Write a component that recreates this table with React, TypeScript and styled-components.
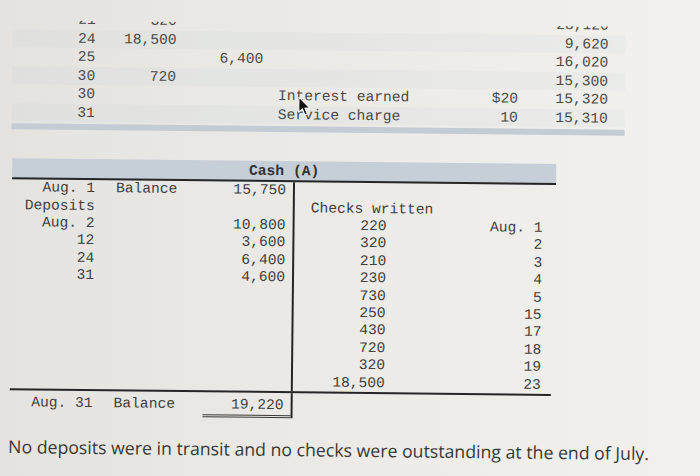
import React from 'react'
import styled, { createGlobalStyle } from 'styled-components'

const GlobalStyle = createGlobalStyle`
  html,
  body {
    margin: 0;
    padding: 0;
    width: 700px;
    height: 476px;
    overflow: hidden;
  }
  body {
    background: linear-gradient(90deg, #e4e3df 0%, #ebeae6 45%, #f2f1ee 100%);
  }
`

type TopRow = [string, string, string, string, string, string]

const bankRows: TopRow[] = [
  ['21', '320', '', '', '', '28,120'],
  ['24', '18,500', '', '', '', '9,620'],
  ['25', '', '6,400', '', '', '16,020'],
  ['30', '720', '', '', '', '15,300'],
  ['30', '', '', 'Interest earned', '$20', '15,320'],
  ['31', '', '', 'Service charge', '10', '15,310'],
]

const debits: [string, string, string][] = [
  ['Aug. 1', 'Balance', '15,750'],
  ['Deposits', '', ''],
  ['Aug. 2', '', '10,800'],
  ['12', '', '3,600'],
  ['24', '', '6,400'],
  ['31', '', '4,600'],
]

const credits: [string, string][] = [
  ['220', 'Aug. 1'],
  ['320', '2'],
  ['210', '3'],
  ['230', '4'],
  ['730', '5'],
  ['250', '15'],
  ['430', '17'],
  ['720', '18'],
  ['320', '19'],
  ['18,500', '23'],
]

const ROWS = 12

export default function App() {
  const leftRows = [...debits, ...Array(ROWS - debits.length).fill(['', '', ''])]

  return (
    <>
      <GlobalStyle />
      <Page>
        <TopClip>
          <TopTable>
            {bankRows.map((row, i) => (
              <BankRow key={i} $shaded={i % 2 === 1}>
                <Cell $align="right">{row[0]}</Cell>
                <Cell $align="right">{row[1]}</Cell>
                <Cell $align="right">{row[2]}</Cell>
                <Description>{row[3]}</Description>
                <Cell $align="right">{row[4]}</Cell>
                <Cell $align="right">{row[5]}</Cell>
              </BankRow>
            ))}
          </TopTable>
        </TopClip>
        <Bar />

        <TAccount>
          <AccountHeader>Cash (A)</AccountHeader>
          <AccountBody>
            <DebitSide>
              {leftRows.map((row, i) => (
                <DebitRow key={i}>
                  <Cell $align="right">{row[0]}</Cell>
                  <Label>{row[1]}</Label>
                  <Amount>{row[2]}</Amount>
                </DebitRow>
              ))}
            </DebitSide>
            <CreditSide>
              <CreditRow />
              <CreditRow>
                <Caption>Checks written</Caption>
              </CreditRow>
              {credits.map((row, i) => (
                <CreditRow key={i}>
                  <Cell $align="right">{row[0]}</Cell>
                  <CreditDate>{row[1]}</CreditDate>
                </CreditRow>
              ))}
            </CreditSide>
          </AccountBody>
          <AccountFooter>
            <BalanceRow>
              <Cell $align="right">Aug. 31</Cell>
              <Label>Balance</Label>
              <Total>19,220</Total>
            </BalanceRow>
          </AccountFooter>
        </TAccount>

        <Note>
          No deposits were in transit and no checks were outstanding at the end of July.
        </Note>

        <Pointer width="13" height="20" viewBox="0 0 13 20">
          <path
            d="M1 1 L1 16 L4.6 12.6 L7.2 18.6 L9.6 17.6 L7 11.8 L12 11.8 Z"
            fill="#111"
            stroke="#fff"
            strokeWidth="1"
            strokeLinejoin="round"
          />
        </Pointer>
      </Page>
    </>
  )
}

const Page = styled.div`
  position: relative;
  width: 700px;
  padding-top: 20px;
  transform: rotate(0.62deg);
  transform-origin: 0 0;
  font-family: 'Liberation Mono', 'DejaVu Sans Mono', monospace;
  font-size: 14.6px;
  color: #4a4a4a;
`

const TopClip = styled.div`
  overflow: hidden;
`

const TopTable = styled.div`
  margin: -9.75px 0 0 13px;
  width: 613px;
`

const BankRow = styled.div<{ $shaded?: boolean }>`
  display: grid;
  grid-template-columns: 83px 81px 87px 177px 78px 90px;
  height: 18.5px;
  line-height: 18.5px;
  padding-right: 17px;
  background: ${({ $shaded }) => ($shaded ? 'rgba(196, 208, 220, 0.13)' : 'transparent')};
`

const Cell = styled.div<{ $align?: 'left' | 'right' }>`
  text-align: ${({ $align }) => $align ?? 'left'};
  white-space: pre;
`

const Description = styled.div`
  padding-left: 15px;
  white-space: pre;
`

const Bar = styled.div`
  margin: 2px 0 0 13px;
  width: 613px;
  height: 6px;
  background: #c3cbd4;
`

const TAccount = styled.div`
  margin: 29px 0 0 14px;
  width: 544px;
  color: #3f3f3f;
`

const AccountHeader = styled.div`
  height: 19px;
  line-height: 20px;
  background: #c6ced7;
  border-bottom: 2px solid #262626;
  text-align: center;
  font-weight: bold;
  color: #333;
`

const AccountBody = styled.div`
  display: flex;
`

const DebitSide = styled.div`
  box-sizing: border-box;
  width: 283px;
  border-right: 2px solid #262626;
`

const DebitRow = styled.div`
  display: grid;
  grid-template-columns: 83px 110px 88px;
  height: 17.4px;
  line-height: 17.4px;
`

const Label = styled.div`
  padding-left: 21px;
  white-space: pre;
`

const Amount = styled.div`
  padding-right: 7px;
  text-align: right;
`

const CreditSide = styled.div`
  flex: 1;
`

const CreditRow = styled.div`
  display: grid;
  grid-template-columns: 92px 169px;
  height: 17.4px;
  line-height: 17.4px;
`

const Caption = styled.div`
  grid-column: 1 / -1;
  padding-left: 16px;
  white-space: pre;
`

const CreditDate = styled.div`
  padding-right: 13px;
  text-align: right;
  white-space: pre;
`

const AccountFooter = styled.div`
  margin-right: 3px;
  border-top: 2px solid #262626;
`

const BalanceRow = styled.div`
  box-sizing: border-box;
  display: grid;
  grid-template-columns: 83px 110px 88px;
  width: 283px;
  border-right: 2px solid #262626;
  line-height: 20px;
  padding-top: 2px;
`

const Total = styled.div`
  padding-right: 7px;
  text-align: right;
  border-bottom: 3px double #3a3a3a;
`

const Note = styled.p`
  margin: 21px 0 0;
  padding-left: 13px;
  font-family: 'Open Sans', Lato, sans-serif;
  font-size: 17.7px;
  line-height: 20px;
  color: #383838;
`

const Pointer = styled.svg`
  position: absolute;
  left: 299px;
  top: 93px;
`
